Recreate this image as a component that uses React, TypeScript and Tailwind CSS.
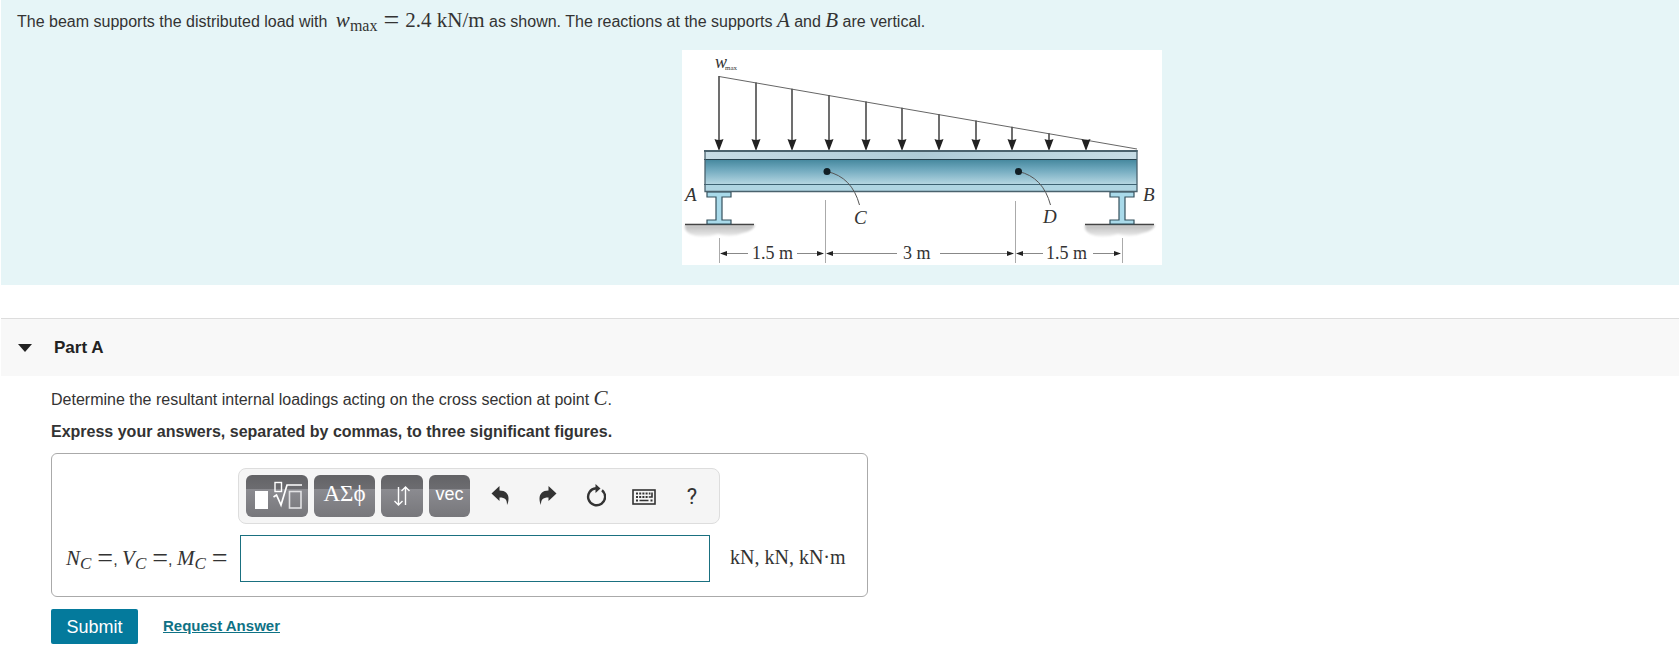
import { useState } from 'react';
import type { ReactNode } from 'react';

const ARROWS = [37, 74, 110, 147, 184, 220, 257, 294, 330, 367, 404];

function Math({ children }: { children: ReactNode }) {
  return (
    <span className="font-['Liberation_Serif',serif] text-[21px] leading-5">{children}</span>
  );
}

function Equals() {
  return <span className="relative top-0.5 text-[28px] leading-5">=</span>;
}

function Quantity({ name }: { name: string }) {
  return (
    <>
      <i>{name}</i>
      <i className="relative top-1 mr-1.5 text-[17px] leading-4">C</i>
      <Equals />
    </>
  );
}

function Support({ x, groundX }: { x: number; groundX: number }) {
  return (
    <g>
      <g transform={`translate(${groundX} 0)`}>
        <path
          d="M0 175H70Q68 181 58 183Q46 188 33 184Q16 189 5 184Q-1 181 0 175Z"
          fill="url(#ground)"
          filter="url(#soft)"
        />
        <path d="M0 174.5H69" stroke="#444" strokeWidth="1.3" />
      </g>
      <path
        transform={`translate(${x} 0)`}
        d="M-12 142H12V147H3V170H12V174H-12V170H-3V147H-12Z"
        fill="#a9daea"
        stroke="#35505c"
        strokeWidth="1.2"
      />
    </g>
  );
}

function Dimension({ from, to, gap }: { from: number; to: number; gap: [number, number] }) {
  return (
    <g>
      <path d={`M${from + 2} 203.5H${gap[0]}M${gap[1]} 203.5H${to - 2}`} stroke="#888" />
      <path d={`M${from + 1} 203.5l7-2.5v5zM${to - 1} 203.5l-7-2.5v5z`} fill="#222" />
    </g>
  );
}

function BeamDiagram() {
  return (
    <svg
      width="480"
      height="215"
      viewBox="0 0 480 215"
      fill="none"
      role="img"
      aria-label="Beam with distributed load"
      className="block bg-white font-['Liberation_Serif',serif]"
    >
      <defs>
        <linearGradient id="web" x1="0" y1="0" x2="0" y2="1">
          <stop offset="0" stopColor="#47899f" />
          <stop offset="0.35" stopColor="#6ca6bb" />
          <stop offset="1" stopColor="#b9d9e4" />
        </linearGradient>
        <linearGradient id="flange" x1="0" y1="0" x2="1" y2="0">
          <stop offset="0" stopColor="#c6dce5" />
          <stop offset="0.5" stopColor="#aecbd7" />
          <stop offset="1" stopColor="#c6dce5" />
        </linearGradient>
        <linearGradient id="ground" x1="0" y1="0" x2="0" y2="1">
          <stop offset="0" stopColor="#bbb" />
          <stop offset="1" stopColor="#eee" />
        </linearGradient>
        <filter id="soft" x="-10%" y="-20%" width="120%" height="160%">
          <feGaussianBlur stdDeviation="1.2" />
        </filter>
      </defs>

      <path d="M37 26.5L455 99" stroke="#666" />
      {ARROWS.map((x) => (
        <g key={x}>
          <path d={`M${x} ${26 + (x - 37) * 0.1735}V94`} stroke="#555" strokeWidth="1.7" />
          <path d={`M${x - 4.5} 89Q${x} 91 ${x + 4.5} 89L${x} 101z`} fill="#222" />
        </g>
      ))}

      <Support x={37} groundX={3} />
      <Support x={440} groundX={403} />

      <rect x="23" y="101" width="432" height="9" fill="url(#flange)" />
      <rect x="23" y="110" width="432" height="25" fill="url(#web)" />
      <rect x="23" y="135" width="432" height="6" fill="#afd5e2" />
      <path d="M22 109.5H455" stroke="#28424e" strokeWidth="1.2" />
      <path d="M22 134.5H455" stroke="#3d6272" />
      <path d="M22 101H455.5" stroke="#4a626d" strokeWidth="2" />
      <path d="M23 100V141.5H455V100" stroke="#4a626d" strokeWidth="1.3" />

      <g stroke="#555">
        <path d="M145 121.5Q170 127 177.5 155" />
        <path d="M336.5 121.5Q361 127 368.5 155" />
      </g>
      <circle cx="145" cy="121.5" r="3.5" fill="#111e24" />
      <circle cx="336.5" cy="121.5" r="3.5" fill="#111e24" />

      <path d="M37.5 188V213M143.5 150V213M333.5 151V213M440.5 188V213" stroke="#aaa" />
      <Dimension from={37} to={143} gap={[66, 115]} />
      <Dimension from={143} to={333} gap={[215, 258]} />
      <Dimension from={333} to={440} gap={[361, 411]} />

      <g fill="#333" fontSize="18">
        <text x="70" y="209">1.5 m</text>
        <text x="221" y="209">3 m</text>
        <text x="364" y="209">1.5 m</text>
      </g>
      <g fill="#333" fontSize="19" fontStyle="italic">
        <text x="3" y="151">A</text>
        <text x="461" y="151">B</text>
        <text x="172" y="174">C</text>
        <text x="361" y="173">D</text>
        <text x="33" y="18" fontSize="18">w</text>
      </g>
      <text x="43" y="20" fontSize="7" fill="#333">max</text>
    </svg>
  );
}

const KEY =
  'flex h-[42px] items-center justify-center rounded-md bg-[linear-gradient(#636366_0,#6c6c70_33%,#8b8b90_34%,#77777b_100%)] text-white';
const TOOL = 'flex h-8 w-8 items-center justify-center text-[#333]';

function Toolbar() {
  return (
    <div className="flex h-14 w-[482px] items-center rounded-lg border border-[#ddd] bg-[#f5f5f5] pl-[7px]">
      <div className="flex gap-1.5">
        <button type="button" aria-label="Templates" className={`${KEY} w-[62px]`}>
          <svg width="50" height="32" viewBox="0 0 50 32" fill="none" stroke="#fff">
            <path d="M3 11h13v18H3z" fill="#fff" stroke="none" />
            <rect x="23" y="2.5" width="6.5" height="9" strokeWidth="1.4" />
            <path d="M21.5 17l3-2 4.5 10L35 5H50" strokeWidth="1.7" />
            <rect x="37.5" y="11.5" width="11.5" height="16.5" stroke="#e2e2e4" strokeWidth="1.6" />
          </svg>
        </button>
        <button
          type="button"
          className={`${KEY} w-[61px] pb-1 font-['Liberation_Serif',serif] text-[23px]`}
        >
          ΑΣϕ
        </button>
        <button type="button" aria-label="Subscript and superscript" className={`${KEY} w-[42px]`}>
          <svg width="18" height="22" viewBox="0 0 18 22" fill="none" stroke="#fff" strokeWidth="1.4">
            <path d="M5.5 2v18M1.5 16l4 4 4-4M12.5 20V2M8.5 6l4-4 4 4" />
          </svg>
        </button>
        <button
          type="button"
          className={`${KEY} w-[41px] pb-1 font-['Liberation_Sans',sans-serif] text-lg`}
        >
          vec
        </button>
      </div>
      <div className="ml-3.5 flex gap-4">
        <button type="button" aria-label="Undo" className={TOOL}>
          <svg width="18" height="20" viewBox="0 0 18 20" fill="currentColor">
            <path d="M0.5 7.5L8.5 0v4.500c6 0 9 3.500 9 8 0 2.500-.5 4.500-1.500 6.500 0-5.500-1.500-7.500-7.500-7.500V15z" />
          </svg>
        </button>
        <button type="button" aria-label="Redo" className={TOOL}>
          <svg width="18" height="20" viewBox="0 0 18 20" fill="currentColor">
            <path d="M17.500 7.500L9.500 0v4.500c-6 0-9 3.500-9 8 0 2.500.5 4.500 1.500 6.500 0-5.500 1.500-7.500 7.500-7.500V15z" />
          </svg>
        </button>
        <button type="button" aria-label="Reset" className={TOOL}>
          <svg width="20" height="24" viewBox="0 0 20 24" fill="none">
            <path d="M16 6.2A8.5 8.5 0 1 1 10 4.3" stroke="currentColor" strokeWidth="2.4" />
            <path d="M9.5 0l5 4.5-5 4.5z" fill="currentColor" />
          </svg>
        </button>
        <button type="button" aria-label="Keyboard" className={TOOL}>
          <svg width="24" height="24" viewBox="0 0 24 24" fill="none" stroke="currentColor">
            <rect x="1" y="6" width="22" height="14" strokeWidth="1.6" />
            <path d="M4 9.5h14.5M4 16.5h2M18.5 16.5h2" strokeWidth="2" strokeDasharray="2 1.2" />
            <path d="M4 13h13" strokeWidth="2" strokeDasharray="2 1.2" />
            <path d="M20 8.5V13h-3M7.5 16.5h9" strokeWidth="1.6" />
          </svg>
        </button>
        <button
          type="button"
          aria-label="Help"
          className={`${TOOL} font-['Roboto',sans-serif] text-[22px]`}
        >
          ?
        </button>
      </div>
    </div>
  );
}

export default function App() {
  const [open, setOpen] = useState(true);
  const [answer, setAnswer] = useState('');

  return (
    <main className="bg-white pl-px font-['Liberation_Sans',Arial,sans-serif] text-base text-[#333]">
      <section className="bg-[#e6f5f7] pb-5">
        <p className="flex h-[50px] items-start px-4 pt-2">
          <span>
            The beam supports the distributed load with{' '}
            <Math>
              <i className="ml-1">w</i>
              <span className="relative top-1 mr-1.5 text-base leading-4">max</span>
              <Equals />
              <span className="ml-1.5">2.4 kN/m</span>
            </Math>{' '}
            as shown. The reactions at the supports <Math><i>A</i></Math> and{' '}
            <Math><i>B</i></Math> are vertical.
          </span>
        </p>
        <div className="flex justify-center pl-[164px]">
          <BeamDiagram />
        </div>
      </section>

      <section className="mt-[33px]">
        <h2 className="border-t border-[#ddd] bg-[#f8f8f8]">
          <button
            type="button"
            aria-expanded={open}
            onClick={() => setOpen(!open)}
            className="flex h-[57px] w-full items-center gap-[22px] pl-[17px] text-[17px] font-bold text-[#222]"
          >
            <svg width="14" height="8" viewBox="0 0 14 8" fill="currentColor">
              <path d="M0 0h14L7 8z" />
            </svg>
            Part A
          </button>
        </h2>

        {open && (
          <div className="px-[50px] pt-3">
            <p className="leading-6">
              Determine the resultant internal loadings acting on the cross section at point{' '}
              <Math><i>C</i></Math>.
            </p>
            <p className="mt-2 font-bold leading-6">
              Express your answers, separated by commas, to three significant figures.
            </p>

            <form onSubmit={(e) => e.preventDefault()}>
              <div className="mt-[9px] w-fit rounded-md border border-[#aaa] pt-3.5 pr-5 pb-3.5 pl-3.5">
                <div className="pl-[172px]">
                  <Toolbar />
                </div>
                <div className="mt-[11px] flex items-center">
                  <label htmlFor="answer" className="w-[174px] whitespace-nowrap">
                    <Math>
                      <Quantity name="N" />
                    </Math>
                    ,{' '}
                    <Math>
                      <Quantity name="V" />
                    </Math>
                    ,{' '}
                    <Math>
                      <Quantity name="M" />
                    </Math>
                  </label>
                  <input
                    id="answer"
                    type="text"
                    value={answer}
                    onChange={(e) => setAnswer(e.target.value)}
                    className="h-[47px] w-[470px] border border-[#1a7080] bg-white px-2 outline-none"
                  />
                  <span className="ml-5 w-[117px] pb-1 whitespace-nowrap font-['Liberation_Serif',serif] text-xl">
                    kN, kN, kN·m
                  </span>
                </div>
              </div>

              <div className="mt-3 flex items-center gap-[25px]">
                <button
                  type="submit"
                  className="h-[35px] w-[87px] rounded-xs bg-[#047a9c] text-lg text-white"
                >
                  Submit
                </button>
                <a href="#" className="text-[15px] font-bold text-[#0f7285] underline">
                  Request Answer
                </a>
              </div>
            </form>
          </div>
        )}
      </section>
    </main>
  );
}
